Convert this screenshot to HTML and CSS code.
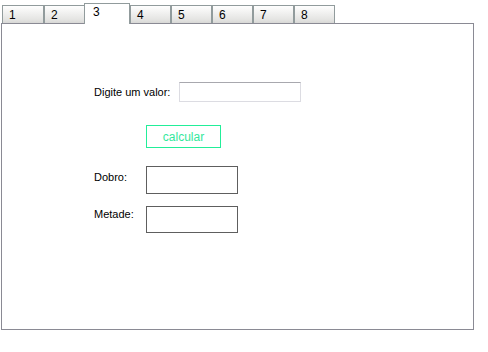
FILE: index.html
```html
<!DOCTYPE html>
<html lang="pt">
<head>
  <meta charset="UTF-8">
  <title>Abas</title>
  <link rel="stylesheet" href="styles.css">
</head>
<body>

<div class="tabs">
  <div class="tab wide">1</div>
  <div class="tab wide">2</div>
  <div class="tab active">3</div>
  <div class="tab">4</div>
  <div class="tab">5</div>
  <div class="tab">6</div>
  <div class="tab">7</div>
  <div class="tab">8</div>
</div>

<div class="panel">
  <div class="row row-valor">
    <label class="label" for="valor">Digite um valor:</label>
    <input class="field" id="valor" type="text">
  </div>
  <div class="row row-btn">
    <button class="btn" type="button">calcular</button>
  </div>
  <div class="row row-dobro">
    <span class="label label-dobro">Dobro:</span>
    <div class="out"></div>
  </div>
  <div class="row row-metade">
    <span class="label label-metade">Metade:</span>
    <div class="out out-metade"></div>
  </div>
</div>

</body>
</html>
```

FILE: styles.css
```css
body {
  margin: 0;
  background: #fff;
  font-family: "Liberation Sans", Arial, sans-serif;
  font-size: 11px;
  color: #000;
}

.tabs {
  display: flex;
  align-items: flex-end;
  height: 23px;
  padding-left: 2px;
  box-sizing: border-box;
}

.tab {
  width: 41px;
  height: 18px;
  box-sizing: border-box;
  border: 1px solid #919b9c;
  border-bottom: none;
  background: linear-gradient(#fefefe, #e4e4e2 80%, #d8d8d6);
  padding: 3px 0 0 6px;
  line-height: 13px;
  font-size: 12px;
}

.tab.wide {
  width: 42px;
}

.tab.active {
  position: relative;
  z-index: 1;
  width: 46px;
  height: 21px;
  margin: 0 0 -1px -2px;
  background: #fff;
  padding: 2px 0 0 8px;
}

.panel {
  width: 473px;
  height: 307px;
  margin-left: 1px;
  box-sizing: border-box;
  border: 1px solid #8a8a94;
  padding: 58px 0 0 92px;
}

.row {
  display: flex;
  align-items: flex-start;
}

.label {
  width: 52px;
  line-height: 13px;
  white-space: nowrap;
}

.row-valor {
  align-items: center;
}

.row-valor .label {
  width: 85px;
}

.field {
  width: 122px;
  height: 20px;
  box-sizing: border-box;
  margin: 0;
  border: 1px solid #dcdce2;
  border-top-color: #a8a8ae;
  padding: 0 3px;
  font: inherit;
}

.row-btn {
  margin-top: 23px;
  padding-left: 52px;
}

.btn {
  width: 75px;
  height: 23px;
  box-sizing: border-box;
  border: 1px solid #22ee99;
  background: #fff;
  color: #33e89c;
  font-family: "Liberation Sans", Arial, sans-serif;
  font-size: 12px;
  padding: 0;
}

.row-dobro {
  margin-top: 18px;
}

.label-dobro {
  padding-top: 5px;
}

.row-metade {
  margin-top: 12px;
}

.label-metade {
  padding-top: 2px;
}

.out {
  width: 92px;
  height: 28px;
  box-sizing: border-box;
  border: 1px solid #5e5e5e;
}

.out-metade {
  height: 27px;
}
```
